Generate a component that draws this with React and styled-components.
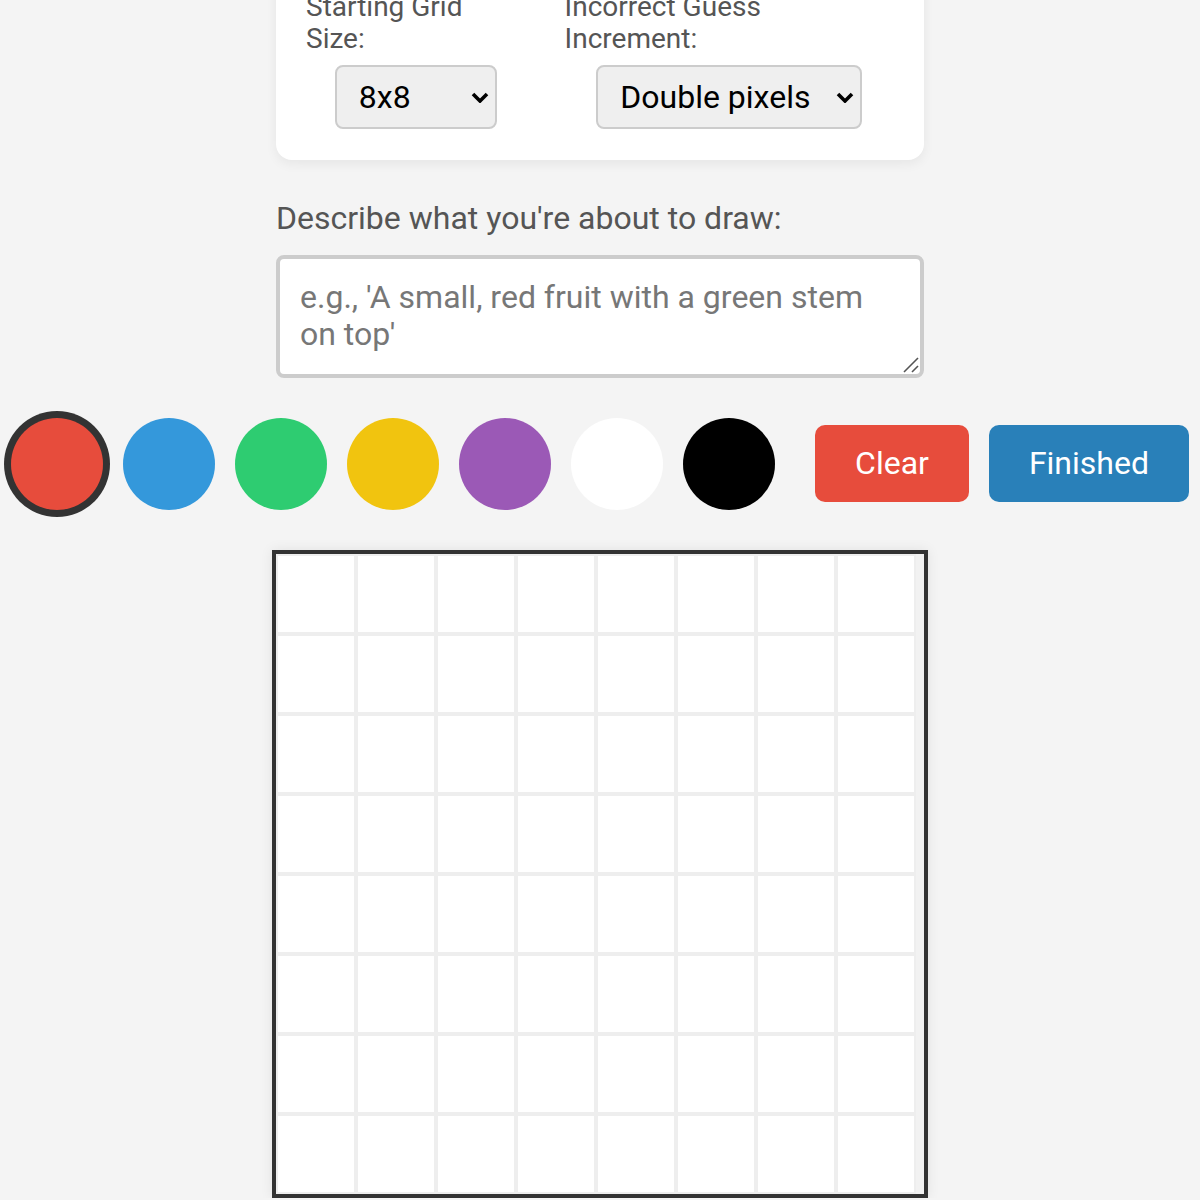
import { useState } from 'react';
import styled, { createGlobalStyle } from 'styled-components';

const GlobalStyle = createGlobalStyle`
  body {
    margin: 0;
    background: #f4f4f4;
    font-family: Roboto, 'Liberation Sans', sans-serif;
  }
`;

const Main = styled.main`
  width: 648px;
  margin: -39px auto 0;
  display: flex;
  flex-direction: column;
  align-items: center;
`;

// settings card
const SettingsCard = styled.div`
  width: 100%;
  box-sizing: border-box;
  background: #fff;
  border-radius: 16px;
  box-shadow: 0 4px 12px rgba(0, 0, 0, 0.06);
  padding: 30px 30px 31px;
  display: flex;
  gap: 39px;
`;

const SettingColumn = styled.div`
  width: ${(p) => p.$width}px;
  display: flex;
  flex-direction: column;
`;

const SettingLabel = styled.label`
  font-size: 28px;
  line-height: 32px;
  color: #555;
  margin-bottom: 10px;
`;

const SelectWrap = styled.div`
  position: relative;
  align-self: center;
  width: ${(p) => p.$width}px;
  svg {
    position: absolute;
    right: 8px;
    top: 27px;
    pointer-events: none;
  }
`;

const Select = styled.select`
  appearance: none;
  width: 100%;
  height: 64px;
  box-sizing: border-box;
  padding: 0 0 0 22px;
  font-family: inherit;
  font-size: 32px;
  color: #000;
  background: #efefef;
  border: 2px solid #ccc;
  border-radius: 8px;
`;

// description
const DescribeLabel = styled.label`
  align-self: stretch;
  margin-top: 40px;
  font-size: 32px;
  line-height: 37.5px;
  color: #555;
`;

const InputWrap = styled.div`
  position: relative;
  align-self: stretch;
  margin-top: 17px;
  svg {
    position: absolute;
    right: 4px;
    bottom: 4px;
    pointer-events: none;
  }
`;

const DescribeInput = styled.textarea`
  display: block;
  width: 100%;
  box-sizing: border-box;
  height: 123px;
  padding: 20px;
  border: 4px solid #ccc;
  border-radius: 8px;
  background: #fff;
  font-family: inherit;
  font-size: 32px;
  line-height: 37.5px;
  color: #333;
  resize: none;
  &::placeholder {
    color: #777;
  }
`;

// palette + actions
const Toolbar = styled.div`
  margin-top: 40px;
  display: flex;
  align-items: center;
  justify-content: center;
  gap: 20px;
`;

const Swatch = styled.button`
  flex: none;
  width: 92px;
  height: 92px;
  padding: 0;
  border: none;
  border-radius: 50%;
  background: ${(p) => p.$color};
  box-shadow: ${(p) => (p.$active ? '0 0 0 7px #333' : 'none')};
  cursor: pointer;
`;

const ActionButton = styled.button`
  flex: none;
  margin-left: ${(p) => (p.$first ? '20px' : '0')};
  padding: 20px 40px;
  border: none;
  border-radius: 10px;
  background: ${(p) => p.$bg};
  color: #fff;
  font-family: inherit;
  font-size: 32px;
  line-height: 37.5px;
  cursor: pointer;
`;

// drawing grid
const Board = styled.div`
  margin-top: 40px;
  width: 648px;
  flex: none;
  display: grid;
  grid-template-columns: repeat(8, 80px);
  grid-auto-rows: 80px;
  border: 4px solid #333;
  background: #f2f2f2;
  box-shadow: 0 0 12px rgba(0, 0, 0, 0.08);
`;

const Cell = styled.div`
  box-sizing: border-box;
  border: 2px solid #eee;
  background: ${(p) => p.$color || '#fff'};
`;

const COLORS = ['#e74c3c', '#3498db', '#2ecc71', '#f1c40f', '#9b59b6', '#ffffff', '#000000'];

const Chevron = () => (
  <svg width="18" height="11" viewBox="0 0 18 11">
    <polyline points="2,2 9,9 16,2" fill="none" stroke="#000" strokeWidth="3.6" />
  </svg>
);

const ResizeGrip = () => (
  <svg width="18" height="18" viewBox="0 0 18 18">
    <line x1="2" y1="16" x2="16" y2="2" stroke="#555" strokeWidth="1.6" />
    <line x1="10" y1="16" x2="16" y2="10" stroke="#555" strokeWidth="1.6" />
  </svg>
);

function App() {
  const [color, setColor] = useState(COLORS[0]);
  const [cells, setCells] = useState(Array(64).fill(null));

  const paint = (i) => {
    const next = [...cells];
    next[i] = color;
    setCells(next);
  };

  return (
    <>
      <GlobalStyle />
      <Main>
        <SettingsCard>
          <SettingColumn $width={220}>
            <SettingLabel>Starting Grid Size:</SettingLabel>
            <SelectWrap $width={162}>
              <Select defaultValue="8">
                <option value="8">8x8</option>
                <option value="16">16x16</option>
              </Select>
              <Chevron />
            </SelectWrap>
          </SettingColumn>
          <SettingColumn $width={330}>
            <SettingLabel>Incorrect Guess Increment:</SettingLabel>
            <SelectWrap $width={266}>
              <Select defaultValue="double">
                <option value="double">Double pixels</option>
                <option value="one">Add one</option>
              </Select>
              <Chevron />
            </SelectWrap>
          </SettingColumn>
        </SettingsCard>

        <DescribeLabel>Describe what you're about to draw:</DescribeLabel>
        <InputWrap>
          <DescribeInput placeholder="e.g., 'A small, red fruit with a green stem on top'" />
          <ResizeGrip />
        </InputWrap>

        <Toolbar>
          {COLORS.map((c) => (
            <Swatch key={c} $color={c} $active={c === color} onClick={() => setColor(c)} />
          ))}
          <ActionButton $first $bg="#e74c3c" onClick={() => setCells(Array(64).fill(null))}>
            Clear
          </ActionButton>
          <ActionButton $bg="#2980b9">Finished</ActionButton>
        </Toolbar>

        <Board>
          {cells.map((c, i) => (
            <Cell key={i} $color={c} onClick={() => paint(i)} />
          ))}
        </Board>
      </Main>
    </>
  );
}

export default App;
